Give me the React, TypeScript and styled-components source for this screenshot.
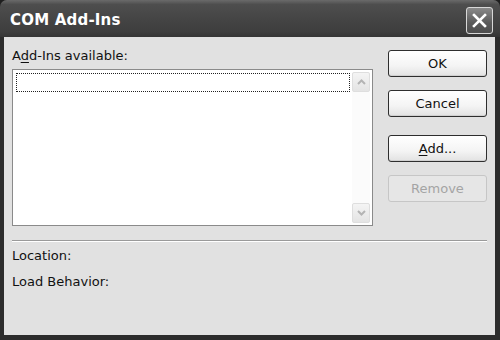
import React from "react";
import styled, { createGlobalStyle } from "styled-components";

const GlobalStyle = createGlobalStyle`
  html, body {
    margin: 0;
    padding: 0;
    background: #1e1e1e;
  }
  body {
    font-family: "DejaVu Sans", "Liberation Sans", sans-serif;
  }
`;

const Window = styled.div`
  width: 500px;
  height: 340px;
  display: flex;
  flex-direction: column;
  background: #2c2c2c;
  border-radius: 7px 7px 0 0;
  overflow: hidden;
`;

const TitleBar = styled.div`
  height: 37px;
  flex: 0 0 37px;
  display: flex;
  align-items: center;
  justify-content: space-between;
  padding: 0 7px 0 10px;
  box-sizing: border-box;
  background: linear-gradient(to bottom, #6a6a6a 0%, #4e4e4e 12%, #454545 50%, #3e3e3e 85%, #353535 100%);
`;

const Title = styled.div`
  color: #fff;
  font-family: "DejaVu Sans", sans-serif;
  font-weight: bold;
  font-size: 15px;
  letter-spacing: 0.2px;
  padding-top: 2px;
`;

const CloseButton = styled.div`
  width: 27px;
  height: 27px;
  box-sizing: border-box;
  border: 1px solid #d8d8d8;
  border-radius: 3px;
  background: linear-gradient(to bottom, #8a8a8a, #5a5a5a 60%, #4e4e4e);
  display: flex;
  align-items: center;
  justify-content: center;
  margin-top: 3px;
`;

const Frame = styled.div`
  flex: 1;
  display: flex;
  flex-direction: column;
  margin: 0 5px 5px 4px;
  background: #e1e1e1;
  padding: 10px 8px 0 8px;
`;

const TopRow = styled.div`
  display: grid;
  grid-template-columns: 1fr 99px;
  column-gap: 15px;
`;

const LeftCol = styled.div`
  display: flex;
  flex-direction: column;
`;

const Label = styled.div`
  font-size: 13px;
  line-height: 17px;
  color: #111;
  margin-bottom: 5px;
  u {
    text-decoration: underline;
    text-underline-offset: 2px;
  }
`;

const ListBox = styled.div`
  height: 157px;
  box-sizing: border-box;
  border: 1px solid #8a8a8a;
  background: #fff;
  display: flex;
  padding: 2px;
`;

const ListArea = styled.div`
  flex: 1;
  display: flex;
  flex-direction: column;
`;

const FocusRow = styled.div`
  height: 17px;
  margin: 1px 0 0 1px;
  border: 1px dotted #222;
`;

const ScrollBar = styled.div`
  width: 18px;
  margin-left: 2px;
  display: flex;
  flex-direction: column;
  justify-content: space-between;
  background: #fbfbfb;
`;

const ArrowButton = styled.div`
  height: 20px;
  box-sizing: border-box;
  border: 1px solid #dedede;
  border-radius: 2px;
  background: linear-gradient(to bottom, #f4f4f4, #e4e4e4);
  display: flex;
  align-items: center;
  justify-content: center;
`;

const ButtonCol = styled.div`
  display: flex;
  flex-direction: column;
  padding-top: 3px;
`;

const Button = styled.div<{ $disabled?: boolean; $gap?: number }>`
  height: 27px;
  box-sizing: border-box;
  margin-bottom: ${(p) => p.$gap ?? 13}px;
  border: 1px solid ${(p) => (p.$disabled ? "#c6c6c6" : "#2e2e2e")};
  border-radius: 3px;
  background: ${(p) =>
    p.$disabled
      ? "#e6e6e6"
      : "linear-gradient(to bottom, #ffffff 0%, #f4f4f4 60%, #e2e2e2 100%)"};
  box-shadow: ${(p) => (p.$disabled ? "none" : "inset 0 -1px 0 #d0d0d0")};
  color: ${(p) => (p.$disabled ? "#a4a4a4" : "#111")};
  font-size: 13px;
  display: flex;
  align-items: center;
  justify-content: center;
  u {
    text-decoration: underline;
    text-underline-offset: 2px;
  }
`;

const Separator = styled.div`
  margin: 14px 0 5px 0;
  height: 1px;
  background: #9a9a9a;
  border-bottom: 1px solid #fff;
`;

const InfoLine = styled.div`
  font-size: 13px;
  line-height: 17px;
  color: #111;
  margin-bottom: 9px;
`;

const App: React.FC = () => {
  return (
    <>
      <GlobalStyle />
      <Window>
        <TitleBar>
          <Title>COM Add-Ins</Title>
          <CloseButton>
            <svg width="15" height="15" viewBox="0 0 15 15">
              <path d="M2 2 L13 13 M13 2 L2 13" stroke="#fff" strokeWidth="2.6" strokeLinecap="square" />
            </svg>
          </CloseButton>
        </TitleBar>
        <Frame>
          <TopRow>
            <LeftCol>
              <Label>
                A<u>d</u>d-Ins available:
              </Label>
              <ListBox>
                <ListArea>
                  <FocusRow />
                </ListArea>
                <ScrollBar>
                  <ArrowButton>
                    <svg width="9" height="6" viewBox="0 0 9 6">
                      <path d="M1 5 L4.5 1.5 L8 5" fill="none" stroke="#b4b4b4" strokeWidth="2" />
                    </svg>
                  </ArrowButton>
                  <ArrowButton>
                    <svg width="9" height="6" viewBox="0 0 9 6">
                      <path d="M1 1 L4.5 4.5 L8 1" fill="none" stroke="#b4b4b4" strokeWidth="2" />
                    </svg>
                  </ArrowButton>
                </ScrollBar>
              </ListBox>
            </LeftCol>
            <ButtonCol>
              <Button>OK</Button>
              <Button $gap={18}>Cancel</Button>
              <Button>
                <span>
                  <u>A</u>dd...
                </span>
              </Button>
              <Button $disabled $gap={0}>
                Remove
              </Button>
            </ButtonCol>
          </TopRow>
          <Separator />
          <InfoLine>Location:</InfoLine>
          <InfoLine>Load Behavior:</InfoLine>
        </Frame>
      </Window>
    </>
  );
};

export default App;
